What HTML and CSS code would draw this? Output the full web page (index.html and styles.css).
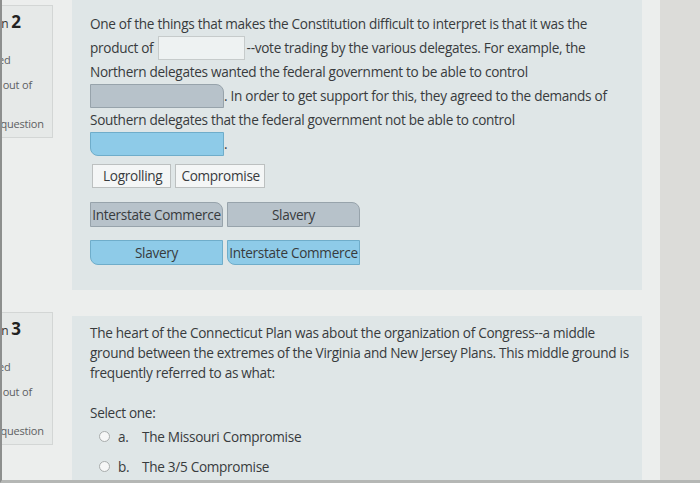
FILE: index.html
```html
<!DOCTYPE html>
<html>
<head>
<meta charset="utf-8">
<link rel="stylesheet" href="styles.css">
</head>
<body>
<div class="screen">
  <div class="page">
    <div class="que q2">
      <div class="info">
        <div class="qno"><span class="qlabel">Question</span> <b>2</b></div>
        <div class="state">Answered</div>
        <div class="grade">Marked out of<br>1.00</div>
        <div class="flag"><span class="flagicon"></span>Flag question</div>
      </div>
      <div class="content">
        <p class="ddtext">One of the things that makes the Constitution difficult to interpret is that it was the product of <span class="drop empty"></span>--vote trading by the various delegates. For example, the Northern delegates wanted the federal government to be able to control <span class="drop gray wide"></span>. In order to get support for this, they agreed to the demands of Southern delegates that the federal government not be able to control <span class="drop blue wide"></span>.</p>
        <div class="choices">
          <span class="choice">Logrolling</span>
          <span class="choice">Compromise</span>
        </div>
        <div class="dragrow">
          <span class="item gray">Interstate Commerce</span>
          <span class="item gray">Slavery</span>
        </div>
        <div class="dragrow">
          <span class="item blue">Slavery</span>
          <span class="item blue">Interstate Commerce</span>
        </div>
      </div>
    </div>
    <div class="que q3">
      <div class="info">
        <div class="qno"><span class="qlabel">Question</span> <b>3</b></div>
        <div class="state">Answered</div>
        <div class="grade">Marked out of<br>1.00</div>
        <div class="flag"><span class="flagicon"></span>Flag question</div>
      </div>
      <div class="content">
        <p class="qtext">The heart of the Connecticut Plan was about the organization of Congress--a middle ground between the extremes of the Virginia and New Jersey Plans. This middle ground is frequently referred to as what:</p>
        <div class="prompt">Select one:</div>
        <div class="answer">
          <div class="opt"><span class="radio"></span><span class="letter">a.</span><span>The Missouri Compromise</span></div>
          <div class="opt"><span class="radio"></span><span class="letter">b.</span><span>The 3/5 Compromise</span></div>
        </div>
      </div>
    </div>
  </div>
  <div class="strip"></div>
</div>
</body>
</html>
```
FILE: styles.css
```css
html, body {
  margin: 0;
  padding: 0;
  height: 100%;
  overflow: hidden;
}
body {
  font-family: "Open Sans", "Noto Sans", sans-serif;
  color: #383b3d;
  background: #d9dad7;
}
.screen {
  display: flex;
  height: 483px;
  border-left: 2px solid #8d8f8e;
  box-sizing: border-box;
  border-bottom: 3px solid #b5b7b5;
}
.page {
  width: 658px;
  background: #eceeed;
  display: flex;
  flex-direction: column;
  gap: 26px;
  overflow: hidden;
}
.strip {
  flex: 1;
  background: #dcdcd9;
}
.que {
  display: flex;
  align-items: flex-start;
}
.info {
  margin-left: -50px;
  width: 86px;
  flex: none;
  margin-top: 5px;
  padding: 6px 6px 6px 7px;
  background: #e6e9e8;
  border: 1px solid #d3d6d5;
  font-size: 11px;
  line-height: 14px;
  color: #5d6062;
  white-space: nowrap;
  letter-spacing: -0.2px;
}
.qno {
  font-size: 12px;
  line-height: 20px;
  color: #333;
  text-indent: -1px;
}
.qno b {
  font-size: 17px;
  font-weight: 700;
  color: #222;
}
.state {
  margin-top: 19px;
  text-indent: 1px;
}
.grade {
  margin-top: 8px;
  line-height: 20px;
  text-indent: 2px;
}
.flag {
  margin-top: 2px;
}
.flagicon {
  display: inline-block;
  width: 14px;
  height: 10px;
  margin-right: 4px;
}
.content {
  margin-left: 19px;
  width: 570px;
  flex: none;
  background: #dfe6e7;
  box-sizing: border-box;
  padding: 12px 12px 0 18px;
  letter-spacing: -0.3px;
}
.q2 .content {
  height: 290px;
}
.q3 .content {
  height: 200px;
  padding-top: 7px;
}
.q3 .info {
  margin-top: -4px;
}
.ddtext {
  margin: 0;
  font-size: 13.6px;
  line-height: 24px;
}
.drop {
  display: inline-block;
  vertical-align: top;
  box-sizing: border-box;
  height: 24px;
  border: 1px solid #c6cbcb;
  background: #eef2f2;
}
.drop.empty {
  width: 87px;
  margin-left: 1px;
  margin-right: 2px;
}
.drop.wide {
  width: 134px;
}
.gray {
  background: #b7c2ca;
  border: 1px solid #97a3ab;
  border-top-right-radius: 8px;
}
.blue {
  background: #8ecbe8;
  border: 1px solid #6fadca;
  border-bottom-left-radius: 8px;
}
.choices {
  display: flex;
  gap: 4px;
  margin-top: 8px;
  margin-left: 2px;
}
.choice {
  box-sizing: border-box;
  height: 24px;
  line-height: 22px;
  padding: 0 8px 0 10px;
  background: #f4f6f6;
  border: 1px solid #bcc0c0;
  font-size: 13.6px;
}
.choice + .choice {
  padding: 0 4px 0 5px;
}
.dragrow {
  display: flex;
  gap: 4px;
  margin-top: 14px;
}
.dragrow + .dragrow {
  margin-top: 13px;
}
.item {
  box-sizing: border-box;
  width: 133px;
  height: 25px;
  line-height: 23px;
  text-align: center;
  font-size: 13.6px;
  white-space: nowrap;
  overflow: hidden;
}
.qtext {
  margin: 0;
  font-size: 13.6px;
  line-height: 20px;
}
.prompt {
  margin-top: 20px;
  font-size: 13.6px;
  line-height: 20px;
}
.answer {
  margin-top: -2px;
  padding-left: 9px;
}
.opt {
  display: flex;
  align-items: center;
  height: 30px;
  font-size: 13.6px;
}
.radio {
  width: 9px;
  height: 9px;
  border-radius: 50%;
  border: 1px solid #a9adad;
  background: #f6f7f7;
  margin-right: 8px;
}
.letter {
  width: 24px;
}
```
